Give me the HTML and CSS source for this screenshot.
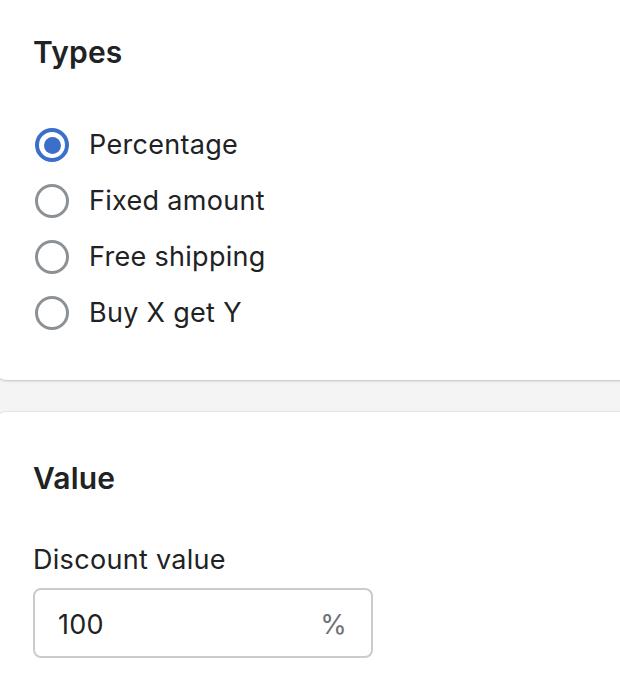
FILE: index.html
```html
<!DOCTYPE html>
<html lang="en">

<head>
    <meta charset="UTF-8">
    <meta name="viewport" content="width=device-width, initial-scale=1.0">
    <title>Discount type</title>
    <link rel="stylesheet" href="styles.css">
</head>

<body>
    <div class="card types-card">
        <h2 class="card-title">Types</h2>
        <div class="radio-list">
            <label class="radio-row">
                <span class="radio checked"></span>
                <span class="radio-label">Percentage</span>
            </label>
            <label class="radio-row">
                <span class="radio"></span>
                <span class="radio-label">Fixed amount</span>
            </label>
            <label class="radio-row">
                <span class="radio"></span>
                <span class="radio-label">Free shipping</span>
            </label>
            <label class="radio-row">
                <span class="radio"></span>
                <span class="radio-label">Buy X get Y</span>
            </label>
        </div>
    </div>

    <div class="card value-card">
        <h2 class="card-title">Value</h2>
        <div class="field">
            <div class="field-label">Discount value</div>
            <div class="text-input">
                <span class="input-value">100</span>
                <span class="input-suffix">%</span>
            </div>
        </div>
    </div>
</body>

</html>
```

FILE: styles.css
```css
body {
    margin: 0;
    background-color: #f4f4f4;
    font-family: Inter, "Noto Sans", sans-serif;
    color: #202223;
    overflow: hidden;
}

.card {
    background-color: #fff;
    border-radius: 10px;
    box-shadow: 0 1px 3px rgba(0, 0, 0, 0.18), 0 0 0 1px rgba(0, 0, 0, 0.04);
    margin: 0 -30px 0 -4px;
    padding-left: 37px;
}

.types-card {
    padding-top: 34px;
    padding-bottom: 39px;
    border-top-left-radius: 0;
}

.value-card {
    margin-top: 32px;
    padding-top: 48px;
    padding-bottom: 60px;
}

.card-title {
    margin: 0;
    font-size: 30px;
    line-height: 36px;
    font-weight: 600;
    letter-spacing: 0.2px;
}

.radio-list {
    display: flex;
    flex-direction: column;
    margin-top: 47px;
    margin-left: 2px;
}

.radio-row {
    display: flex;
    align-items: center;
    height: 56px;
    gap: 20px;
}

.radio {
    box-sizing: border-box;
    width: 34px;
    height: 34px;
    border-radius: 50%;
    border: 3px solid #8c9196;
    display: flex;
    align-items: center;
    justify-content: center;
}

.radio.checked {
    border: 4px solid #3b6fc9;
}

.radio.checked::after {
    content: "";
    width: 17px;
    height: 17px;
    border-radius: 50%;
    background-color: #3b6fc9;
}

.radio-label,
.field-label,
.text-input {
    font-size: 27px;
    letter-spacing: 0.3px;
}

.radio-label {
    line-height: 32px;
}

.field {
    margin-top: 48px;
}

.field-label {
    line-height: 32px;
    margin-bottom: 12px;
}

.text-input {
    box-sizing: border-box;
    width: 340px;
    height: 70px;
    border: 2px solid #c9cccf;
    border-radius: 8px;
    display: flex;
    align-items: center;
    justify-content: space-between;
    padding: 2px 24px 0 23px;
}

.input-suffix {
    color: #6d7175;
}
```
